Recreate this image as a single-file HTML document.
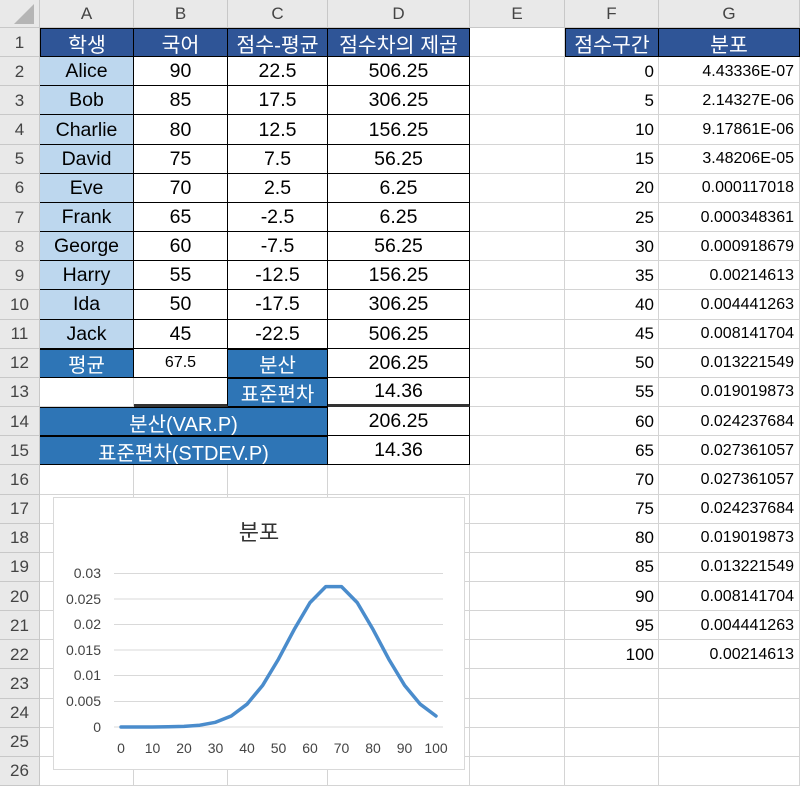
<!DOCTYPE html>
<html><head><meta charset="utf-8">
<style>
*{margin:0;padding:0;box-sizing:border-box}
body{width:800px;height:771px;overflow:hidden;background:#fff;font-family:"Liberation Sans","Noto Sans CJK KR",sans-serif;position:relative}
.g{display:grid;grid-template-columns:40px 94px 94px 100px 142px 95px 94px 141px;grid-template-rows:28px repeat(26,29.17px);position:absolute;left:0;top:0}
.g>div{border-right:1px solid #d4d4d4;border-bottom:1px solid #d4d4d4;display:flex;align-items:center;justify-content:center;font-size:19.5px;color:#000;white-space:nowrap;overflow:hidden;padding-top:1px}
.h{background:#e9e9e9!important;color:#444!important;font-size:17px!important;border-color:#c8c8c8!important}
.r{background:#e9e9e9!important;color:#444!important;font-size:17px!important;border-color:#c8c8c8!important}
.d{background:#2f5597!important;color:#fff!important;border:1px solid #000!important;border-left:none!important;font-size:20.5px!important}
.m{background:#2e75b6!important;color:#fff!important;border:1px solid #000!important;border-left:none!important;font-size:20px!important}
.l{background:#bdd7ee!important;border-right:1px solid #000!important;border-bottom:1px solid #000!important}
.t{border-right:1px solid #000!important;border-bottom:1px solid #000!important}
.f{justify-content:flex-end!important;padding-right:4px;font-size:17px!important}
.s{justify-content:flex-end!important;padding-right:5px;font-size:16px!important}
.n{font-size:16px!important}
</style></head><body>
<div class="g">
<div class="h"></div><div class="h">A</div><div class="h">B</div><div class="h">C</div><div class="h">D</div><div class="h">E</div><div class="h">F</div><div class="h">G</div>
<div class="r">1</div><div class="d" style="border-left:1px solid #000!important">학생</div><div class="d">국어</div><div class="d">점수-평균</div><div class="d">점수차의 제곱</div><div></div><div class="d" style="border-left:1px solid #000!important">점수구간</div><div class="d">분포</div>
<div class="r">2</div><div class="l">Alice</div><div class="t">90</div><div class="t">22.5</div><div class="t">506.25</div><div></div><div class="f">0</div><div class="s">4.43336E-07</div>
<div class="r">3</div><div class="l">Bob</div><div class="t">85</div><div class="t">17.5</div><div class="t">306.25</div><div></div><div class="f">5</div><div class="s">2.14327E-06</div>
<div class="r">4</div><div class="l">Charlie</div><div class="t">80</div><div class="t">12.5</div><div class="t">156.25</div><div></div><div class="f">10</div><div class="s">9.17861E-06</div>
<div class="r">5</div><div class="l">David</div><div class="t">75</div><div class="t">7.5</div><div class="t">56.25</div><div></div><div class="f">15</div><div class="s">3.48206E-05</div>
<div class="r">6</div><div class="l">Eve</div><div class="t">70</div><div class="t">2.5</div><div class="t">6.25</div><div></div><div class="f">20</div><div class="s">0.000117018</div>
<div class="r">7</div><div class="l">Frank</div><div class="t">65</div><div class="t">-2.5</div><div class="t">6.25</div><div></div><div class="f">25</div><div class="s">0.000348361</div>
<div class="r">8</div><div class="l">George</div><div class="t">60</div><div class="t">-7.5</div><div class="t">56.25</div><div></div><div class="f">30</div><div class="s">0.000918679</div>
<div class="r">9</div><div class="l">Harry</div><div class="t">55</div><div class="t">-12.5</div><div class="t">156.25</div><div></div><div class="f">35</div><div class="s">0.00214613</div>
<div class="r">10</div><div class="l">Ida</div><div class="t">50</div><div class="t">-17.5</div><div class="t">306.25</div><div></div><div class="f">40</div><div class="s">0.004441263</div>
<div class="r">11</div><div class="l">Jack</div><div class="t">45</div><div class="t">-22.5</div><div class="t">506.25</div><div></div><div class="f">45</div><div class="s">0.008141704</div>
<div class="r">12</div><div class="m">평균</div><div class="t n">67.5</div><div class="m">분산</div><div class="t">206.25</div><div></div><div class="f">50</div><div class="s">0.013221549</div>
<div class="r">13</div><div></div><div class="t" style="border-bottom:3px solid #333!important"></div><div class="m">표준편차</div><div class="t" style="border-bottom:3px solid #333!important">14.36</div><div></div><div class="f">55</div><div class="s">0.019019873</div>
<div class="r">14</div><div class="m" style="grid-column:span 3">분산(VAR.P)</div><div class="t">206.25</div><div></div><div class="f">60</div><div class="s">0.024237684</div>
<div class="r">15</div><div class="m" style="grid-column:span 3">표준편차(STDEV.P)</div><div class="t">14.36</div><div></div><div class="f">65</div><div class="s">0.027361057</div>
<div class="r">16</div><div></div><div></div><div></div><div></div><div></div><div class="f">70</div><div class="s">0.027361057</div>
<div class="r">17</div><div></div><div></div><div></div><div></div><div></div><div class="f">75</div><div class="s">0.024237684</div>
<div class="r">18</div><div></div><div></div><div></div><div></div><div></div><div class="f">80</div><div class="s">0.019019873</div>
<div class="r">19</div><div></div><div></div><div></div><div></div><div></div><div class="f">85</div><div class="s">0.013221549</div>
<div class="r">20</div><div></div><div></div><div></div><div></div><div></div><div class="f">90</div><div class="s">0.008141704</div>
<div class="r">21</div><div></div><div></div><div></div><div></div><div></div><div class="f">95</div><div class="s">0.004441263</div>
<div class="r">22</div><div></div><div></div><div></div><div></div><div></div><div class="f">100</div><div class="s">0.00214613</div>
<div class="r">23</div><div></div><div></div><div></div><div></div><div></div><div></div><div></div>
<div class="r">24</div><div></div><div></div><div></div><div></div><div></div><div></div><div></div>
<div class="r">25</div><div></div><div></div><div></div><div></div><div></div><div></div><div></div>
<div class="r">26</div><div></div><div></div><div></div><div></div><div></div><div></div><div></div>
</div>
<svg width="800" height="771" style="position:absolute;left:0;top:0" font-family="Liberation Sans, Noto Sans CJK KR, sans-serif">
<path d="M40 0 L20 20 L40 20 Z" fill="#b5b5b5" transform="translate(-6,4)"/>
<rect x="53.5" y="497.5" width="411" height="272" fill="#fff" stroke="#d9d9d9"/>
<text x="259" y="540" font-size="22" text-anchor="middle" fill="#333">분포</text>
<g stroke="#d9d9d9" stroke-width="1">
<line x1="114" x2="443" y1="573.5" y2="573.5"/><line x1="114" x2="443" y1="599" y2="599"/><line x1="114" x2="443" y1="624.5" y2="624.5"/><line x1="114" x2="443" y1="650" y2="650"/><line x1="114" x2="443" y1="675.5" y2="675.5"/><line x1="114" x2="443" y1="701.5" y2="701.5"/><line x1="114" x2="443" y1="727" y2="727"/>
</g>
<g font-size="14" fill="#444" text-anchor="end">
<text x="101" y="578">0.03</text><text x="101" y="604">0.025</text><text x="101" y="629">0.02</text><text x="101" y="655">0.015</text><text x="101" y="680">0.01</text><text x="101" y="706">0.005</text><text x="101" y="732">0</text>
</g>
<g font-size="14" fill="#444" text-anchor="middle">
<text x="121" y="753">0</text><text x="152.5" y="753">10</text><text x="184" y="753">20</text><text x="215.5" y="753">30</text><text x="247" y="753">40</text><text x="278.5" y="753">50</text><text x="310" y="753">60</text><text x="341.5" y="753">70</text><text x="373" y="753">80</text><text x="404.5" y="753">90</text><text x="436" y="753">100</text>
</g>
<polyline fill="none" stroke="#4a8ccc" stroke-width="3.5" stroke-linejoin="round" stroke-linecap="round" points="121,727 136.75,727 152.5,727 168.25,726.8 184,726.4 199.75,725.2 215.5,722.3 231.25,716 247,704.2 262.75,685.2 278.5,659.1 294.25,629.4 310,602.6 325.75,586.6 341.5,586.6 357.25,602.6 373,629.4 388.75,659.1 404.5,685.2 420.25,704.2 436,716"/>
</svg>
</body></html>
